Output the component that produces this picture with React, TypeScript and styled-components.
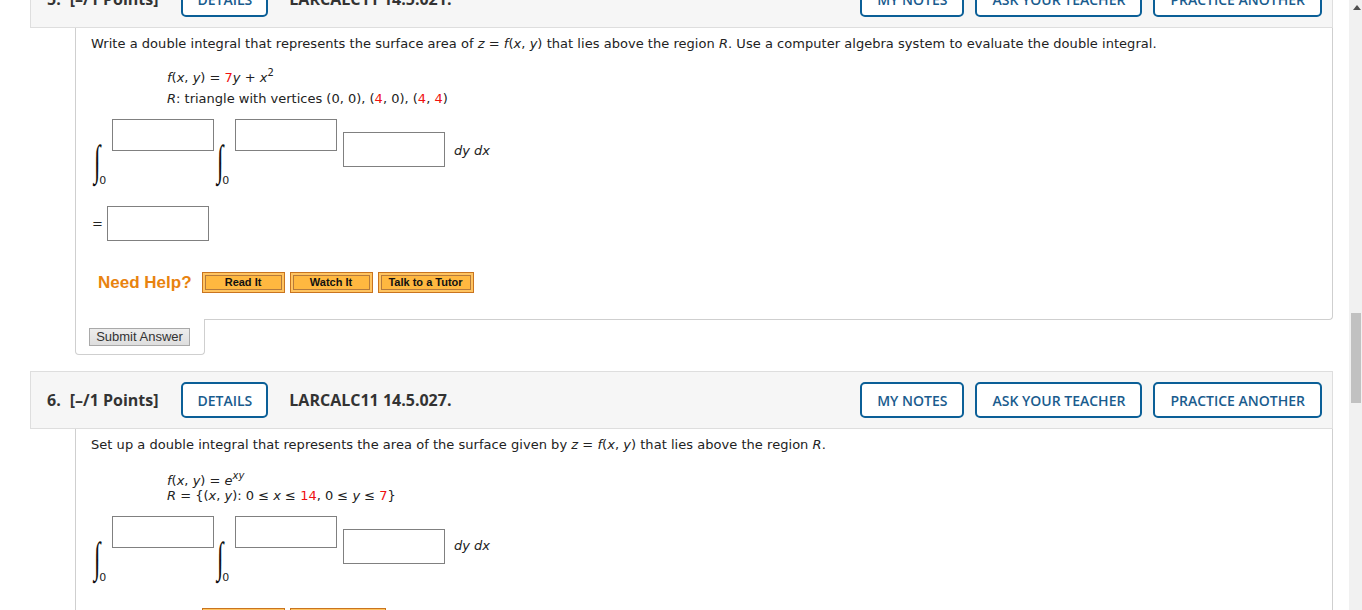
import React from 'react';
import styled, { createGlobalStyle } from 'styled-components';

const Global = createGlobalStyle`
  html, body { margin: 0; padding: 0; background: #fff; overflow: hidden; }
  body { font-family: "DejaVu Sans", Verdana, sans-serif; font-size: 13px; color: #222; }
  * { box-sizing: border-box; }
`;

const Screen = styled.div`
  display: flex;
  width: 1362px;
  height: 610px;
  overflow: hidden;
`;

const Viewport = styled.main`
  flex: 1;
  height: 610px;
  overflow: hidden;
`;

/* simulates the page being scrolled down */
const Scrolled = styled.div`
  margin-top: -30px;
`;

const ScrollTrack = styled.div`
  width: 13px;
  height: 610px;
  background: #f1f1f1;
  display: flex;
  flex-direction: column;
  align-items: flex-start;
`;

const ArrowUp = styled.div`
  width: 0;
  height: 0;
  margin: 5px 0 0 4px;
  border-left: 4px solid transparent;
  border-right: 4px solid transparent;
  border-bottom: 5px solid #505050;
`;

const Thumb = styled.div`
  width: 10px;
  height: 90px;
  margin: 303px 0 0 2px;
  background: #c1c1c1;
`;

const Question = styled.section<{ $mt?: number }>`
  margin-left: 30px;
  width: 1303px;
  margin-top: ${(p) => p.$mt ?? 0}px;
`;

const Header = styled.div`
  display: flex;
  align-items: center;
  height: 58px;
  padding: 0 10px 0 16px;
  background: #f6f6f6;
  border: 1px solid #dedede;
  font-family: "Open Sans", "Liberation Sans", sans-serif;
  color: #333;
`;

const QNum = styled.span`
  font-size: 16px;
  font-weight: 700;
  margin-right: 9px;
`;

const Points = styled.span`
  font-size: 16px;
  font-weight: 700;
  margin-right: 23px;
`;

const Code = styled.span`
  font-size: 16px;
  font-weight: 700;
  margin-left: 21px;
  flex: 1;
`;

const HeaderButtons = styled.div`
  display: flex;
  gap: 11px;
`;

const OutlineButton = styled.button<{ $px?: number }>`
  height: 36px;
  padding: 0 ${(p) => p.$px ?? 15}px;
  background: #fff;
  border: 2px solid #0b5f97;
  border-radius: 5px;
  font-family: "Open Sans", "Liberation Sans", sans-serif;
  font-size: 14px;
  font-weight: 600;
  color: #1a5c8e;
`;

const Card = styled.div<{ $pb: number }>`
  margin-left: 45px;
  border: 1px solid #cfcfcf;
  border-top: none;
  border-bottom-right-radius: 4px;
  background: #fff;
  padding: 8px 0 ${(p) => p.$pb}px 15px;
`;

const QText = styled.p`
  margin: 0;
  line-height: 16px;
  letter-spacing: 0.035px;
`;

const Var = styled.i`
  font-style: italic;
`;

const Red = styled.span`
  color: #f01010;
`;

const Sup = styled.sup`
  font-size: 10px;
  line-height: 0;
  vertical-align: 6px;
`;

const Formula = styled.div<{ $lh: number; $mt: number }>`
  margin: ${(p) => p.$mt}px 0 0 76px;
  line-height: ${(p) => p.$lh}px;
`;

const IntegralRow = styled.div<{ $mt: number }>`
  display: flex;
  align-items: flex-start;
  margin-top: ${(p) => p.$mt}px;
`;

const Sign = styled.span`
  width: 21px;
  height: 67px;
  display: flex;
  align-items: flex-end;
  padding-left: 3px;
`;

const IntGlyph = styled.span`
  font-family: "Liberation Serif", "DejaVu Serif", serif;
  font-size: 26px;
  line-height: 26px;
  display: inline-block;
  transform: scale(0.9, 1.65);
  transform-origin: bottom left;
  margin-bottom: 3px;
  color: #111;
`;

const Lower = styled.span`
  font-size: 11px;
  line-height: 11px;
  margin: 0 0 0 -2px;
`;

const Box = styled.input<{ $h: number; $mt?: number }>`
  width: 102px;
  height: ${(p) => p.$h}px;
  margin-top: ${(p) => p.$mt ?? 0}px;
  border: 1px solid #808080;
  border-radius: 0;
  padding: 0 4px;
  background: #fff;
  font: 13px "DejaVu Sans", sans-serif;
`;

const Integrand = styled(Box)`
  margin-left: 6px;
`;

const Diff = styled.span<{ $mt: number }>`
  font-style: italic;
  margin: ${(p) => p.$mt}px 0 0 9px;
  line-height: 16px;
`;

const AnswerRow = styled.div`
  display: flex;
  align-items: center;
  gap: 4px;
  margin: 20px 0 0 1px;
`;

const HelpRow = styled.div<{ $mt: number }>`
  display: flex;
  align-items: center;
  margin: ${(p) => p.$mt}px 0 0 7px;
`;

const NeedHelp = styled.span`
  font-family: "Liberation Sans", Arial, sans-serif;
  font-weight: 700;
  font-size: 17px;
  color: #e8830f;
  margin-right: 10px;
`;

const HelpButtons = styled.div`
  display: flex;
  gap: 5px;
`;

const HelpButton = styled.button<{ $w: number }>`
  width: ${(p) => p.$w}px;
  height: 21px;
  padding: 2px;
  border: 1px solid #c9741f;
  background: #ffc461;
  display: flex;
`;

const HelpInner = styled.span`
  flex: 1;
  border: 1px solid #b57a3c;
  background: #ffb840;
  font-family: "Liberation Sans", Arial, sans-serif;
  font-weight: 700;
  font-size: 11px;
  line-height: 13px;
  color: #111;
  text-align: center;
`;

const SubmitTab = styled.div`
  margin: -1px 0 0 45px;
  width: 130px;
  height: 36px;
  border: 1px solid #cfcfcf;
  border-top: none;
  border-radius: 0 0 4px 4px;
  background: #fff;
  padding: 9px 0 0 13px;
`;

const SubmitButton = styled.button`
  width: 101px;
  height: 18px;
  padding: 0;
  border: 1px solid #a9a9a9;
  background: linear-gradient(#ededed, #dedede);
  font-family: "Liberation Sans", Arial, sans-serif;
  font-size: 13px;
  line-height: 16px;
  color: #333;
`;

const HeaderRow: React.FC<{ num: string; code: string }> = ({ num, code }) => (
  <Header>
    <QNum>{num}</QNum>
    <Points>[–/1 Points]</Points>
    <OutlineButton $px={14}>DETAILS</OutlineButton>
    <Code>{code}</Code>
    <HeaderButtons>
      <OutlineButton>MY NOTES</OutlineButton>
      <OutlineButton>ASK YOUR TEACHER</OutlineButton>
      <OutlineButton>PRACTICE ANOTHER</OutlineButton>
    </HeaderButtons>
  </Header>
);

const Integral: React.FC = () => (
  <Sign>
    <IntGlyph>∫</IntGlyph>
    <Lower>0</Lower>
  </Sign>
);

const Integrals: React.FC<{ mt: number; dmt: number }> = ({ mt, dmt }) => (
  <IntegralRow $mt={mt}>
    <Integral />
    <Box $h={32} />
    <Integral />
    <Box $h={32} />
    <Integrand $h={35} $mt={13} />
    <Diff $mt={dmt}>dy dx</Diff>
  </IntegralRow>
);

export default function App() {
  return (
    <Screen>
      <Global />
      <Viewport>
        <Scrolled>
          <Question>
            <HeaderRow num="5." code="LARCALC11 14.5.021." />
            <Card $pb={26}>
              <QText>
                Write a double integral that represents the surface area of <Var>z</Var> = <Var>f</Var>(<Var>x</Var>, <Var>y</Var>) that lies above the region <Var>R</Var>. Use a computer algebra system to evaluate the double integral.
              </QText>
              <Formula $lh={21} $mt={15}>
                <div>
                  <Var>f</Var>(<Var>x</Var>, <Var>y</Var>) = <Red>7</Red><Var>y</Var> + <Var>x</Var><Sup>2</Sup>
                </div>
                <div>
                  <Var>R</Var>: triangle with vertices (0, 0), (<Red>4</Red>, 0), (<Red>4</Red>, <Red>4</Red>)
                </div>
              </Formula>
              <Integrals mt={10} dmt={24} />
              <AnswerRow>
                <span>=</span>
                <Box $h={35} />
              </AnswerRow>
              <HelpRow $mt={31}>
                <NeedHelp>Need Help?</NeedHelp>
                <HelpButtons>
                  <HelpButton $w={83}><HelpInner>Read It</HelpInner></HelpButton>
                  <HelpButton $w={83}><HelpInner>Watch It</HelpInner></HelpButton>
                  <HelpButton $w={96}><HelpInner>Talk to a Tutor</HelpInner></HelpButton>
                </HelpButtons>
              </HelpRow>
            </Card>
            <SubmitTab>
              <SubmitButton>Submit Answer</SubmitButton>
            </SubmitTab>
          </Question>
          <Question $mt={16}>
            <HeaderRow num="6." code="LARCALC11 14.5.027." />
            <Card $pb={26}>
              <QText>
                Set up a double integral that represents the area of the surface given by <Var>z</Var> = <Var>f</Var>(<Var>x</Var>, <Var>y</Var>) that lies above the region <Var>R</Var>.
              </QText>
              <Formula $lh={15} $mt={20}>
                <div>
                  <Var>f</Var>(<Var>x</Var>, <Var>y</Var>) = <Var>e</Var><Sup><Var>xy</Var></Sup>
                </div>
                <div>
                  <Var>R</Var> = {'{'}(<Var>x</Var>, <Var>y</Var>): 0 ≤ <Var>x</Var> ≤ <Red>14</Red>, 0 ≤ <Var>y</Var> ≤ <Red>7</Red>{'}'}
                </div>
              </Formula>
              <Integrals mt={13} dmt={22} />
              <HelpRow $mt={25}>
                <NeedHelp>Need Help?</NeedHelp>
                <HelpButtons>
                  <HelpButton $w={83}><HelpInner>Read It</HelpInner></HelpButton>
                  <HelpButton $w={96}><HelpInner>Talk to a Tutor</HelpInner></HelpButton>
                </HelpButtons>
              </HelpRow>
            </Card>
          </Question>
        </Scrolled>
      </Viewport>
      <ScrollTrack>
        <ArrowUp />
        <Thumb />
      </ScrollTrack>
    </Screen>
  );
}
